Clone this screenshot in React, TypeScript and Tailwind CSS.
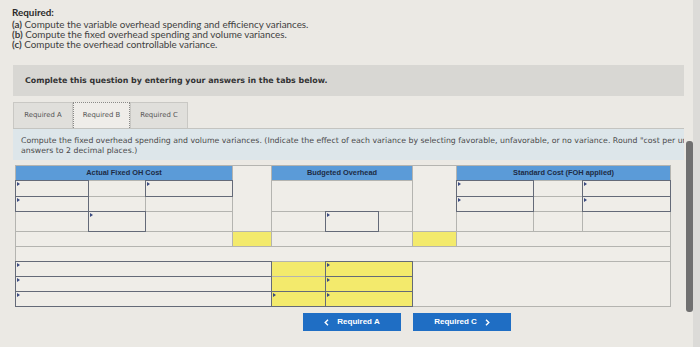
import * as React from "react";

type Cell = { pos: string; kind: "plain" | "head" | "input" | "yellow" | "yinput"; label?: string };

// grid columns follow the x edges of the reference table
const cells: Cell[] = [
  // header
  { pos: "col-start-1 col-span-3 row-start-1", kind: "head", label: "Actual Fixed OH Cost" },
  { pos: "col-start-4 col-span-1 row-start-1 row-span-4", kind: "plain" },
  { pos: "col-start-5 col-span-3 row-start-1", kind: "head", label: "Budgeted Overhead" },
  { pos: "col-start-8 col-span-1 row-start-1 row-span-4", kind: "plain" },
  { pos: "col-start-9 col-span-3 row-start-1", kind: "head", label: "Standard Cost (FOH applied)" },
  // row 1
  { pos: "col-start-1 row-start-2", kind: "input" },
  { pos: "col-start-2 row-start-2", kind: "plain" },
  { pos: "col-start-3 row-start-2", kind: "input" },
  { pos: "col-start-5 col-span-3 row-start-2 row-span-2", kind: "plain" },
  { pos: "col-start-9 row-start-2", kind: "input" },
  { pos: "col-start-10 row-start-2", kind: "plain" },
  { pos: "col-start-11 row-start-2", kind: "input" },
  // row 2
  { pos: "col-start-1 row-start-3", kind: "input" },
  { pos: "col-start-2 row-start-3", kind: "plain" },
  { pos: "col-start-3 row-start-3", kind: "plain" },
  { pos: "col-start-9 row-start-3", kind: "input" },
  { pos: "col-start-10 row-start-3", kind: "plain" },
  { pos: "col-start-11 row-start-3", kind: "input" },
  // row 3
  { pos: "col-start-1 row-start-4", kind: "plain" },
  { pos: "col-start-2 row-start-4", kind: "input" },
  { pos: "col-start-3 row-start-4", kind: "plain" },
  { pos: "col-start-5 row-start-4", kind: "plain" },
  { pos: "col-start-6 row-start-4", kind: "input" },
  { pos: "col-start-7 row-start-4", kind: "plain" },
  { pos: "col-start-9 row-start-4", kind: "plain" },
  { pos: "col-start-10 row-start-4", kind: "plain" },
  { pos: "col-start-11 row-start-4", kind: "plain" },
  // row 4 (variances)
  { pos: "col-start-1 col-span-3 row-start-5", kind: "plain" },
  { pos: "col-start-4 row-start-5", kind: "yellow" },
  { pos: "col-start-5 col-span-3 row-start-5", kind: "plain" },
  { pos: "col-start-8 row-start-5", kind: "yellow" },
  { pos: "col-start-9 col-span-3 row-start-5", kind: "plain" },
  // spacer row
  { pos: "col-start-1 col-span-11 row-start-6", kind: "plain" },
  // bottom rows
  { pos: "col-start-1 col-span-4 row-start-7", kind: "input" },
  { pos: "col-start-5 row-start-7", kind: "yellow" },
  { pos: "col-start-6 col-span-2 row-start-7", kind: "yinput" },
  { pos: "col-start-8 col-span-4 row-start-7 row-span-3", kind: "plain" },
  { pos: "col-start-1 col-span-4 row-start-8", kind: "input" },
  { pos: "col-start-5 row-start-8", kind: "yellow" },
  { pos: "col-start-6 col-span-2 row-start-8", kind: "yinput" },
  { pos: "col-start-1 col-span-4 row-start-9", kind: "input" },
  { pos: "col-start-5 row-start-9", kind: "yinput" },
  { pos: "col-start-6 col-span-2 row-start-9", kind: "yinput" },
];

function Marker() {
  return (
    <svg className="absolute left-[1px] top-[1px]" width="3" height="4" viewBox="0 0 3 4">
      <path d="M0 0 L3 2 L0 4 Z" fill="#3a4a80" />
    </svg>
  );
}

function GridCell({ c }: { c: Cell }) {
  if (c.kind === "head") {
    return (
      <div
        className={`${c.pos} flex items-center justify-center border-r border-b border-[#b4b4b0] bg-[#5b9bd8] font-['Liberation_Sans',sans-serif] text-[7.4px] font-bold text-[#1d2b45]`}
      >
        {c.label}
      </div>
    );
  }
  const yellow = c.kind === "yellow" || c.kind === "yinput";
  const input = c.kind === "input" || c.kind === "yinput";
  return (
    <div className={`${c.pos} relative border-r border-b border-[#b4b4b0] ${yellow ? "bg-[#f3ea6c]" : "bg-[#efede8]"}`}>
      {input && (
        <div className="absolute -left-px -top-px -right-px -bottom-px border-[1.5px] border-[#646a78]">
          <Marker />
        </div>
      )}
    </div>
  );
}

function Chevron({ dir }: { dir: "l" | "r" }) {
  return (
    <svg width="5" height="7" viewBox="0 0 5 7">
      <path
        d={dir === "l" ? "M4 0.8 L1.2 3.5 L4 6.2" : "M1 0.8 L3.8 3.5 L1 6.2"}
        fill="none"
        stroke="white"
        strokeWidth="1.4"
      />
    </svg>
  );
}

export default function App() {
  return (
    <div className="relative h-[347px] w-[700px] overflow-hidden bg-[#ebe9e4] font-['Lato',sans-serif]">
      <div className="pl-[12px] pt-[7px] text-[9.85px] text-[#3f3f3f]">
        <div className="mb-[1px] font-bold leading-[11px] text-[#2a2a2a]">Required:</div>
        <div className="leading-[10px]">
          <b>(a)</b> Compute the variable overhead spending and efficiency variances.
        </div>
        <div className="leading-[10px]">
          <b>(b)</b> Compute the fixed overhead spending and volume variances.
        </div>
        <div className="leading-[10px]">
          <b>(c)</b> Compute the overhead controllable variance.
        </div>
      </div>

      <div className="ml-[13px] mr-[16px] mt-[16px] flex h-[31px] items-center bg-[#d8d7d3] pl-[12px] font-['DejaVu_Sans',sans-serif] text-[7.9px] font-bold text-[#333]">
        Complete this question by entering your answers in the tabs below.
      </div>

      <div className="ml-[13px] mt-[6px] flex h-[26px] font-['DejaVu_Sans',sans-serif] text-[6.9px] text-[#555]">
        <div className="flex w-[60px] items-center justify-center border border-b-0 border-[#c9c8c4] bg-[#e0dfdb]">Required A</div>
        <div className="flex w-[57px] items-center justify-center border-x border-t border-dotted border-[#8a8a88] bg-[#efede9]">Required B</div>
        <div className="flex w-[58px] items-center justify-center border border-b-0 border-[#c9c8c4] bg-[#e0dfdb]">Required C</div>
      </div>

      <div className="ml-[13px] mr-[16px] border-t border-[#c4c4c0]">
        <div className="h-[31px] overflow-hidden bg-[#dde6ea] pl-[8px] pt-[7px] font-['DejaVu_Sans',sans-serif] text-[7.8px] leading-[9.5px] text-[#4a4a4a]">
          <div className="whitespace-nowrap">
            Compute the fixed overhead spending and volume variances. (Indicate the effect of each variance by selecting favorable, unfavorable, or no variance. Round "cost per unit"
          </div>
          <div>answers to 2 decimal places.)</div>
        </div>

        <div className="ml-[2px] mt-[5px] grid w-fit grid-cols-[73px_57px_87px_39px_54px_53px_34px_44px_77px_49px_88px] grid-rows-[15px_16px_15px_20px_15px_15px_15px_15px_15px] border-l border-t border-[#b4b4b0]">
          {cells.map((c, i) => (
            <GridCell key={i} c={c} />
          ))}
        </div>

        <div className="ml-[290px] mt-[6px] flex gap-[12px] font-['Liberation_Sans',sans-serif] text-[8px] font-bold text-white">
          <button className="flex h-[18px] w-[98px] items-center justify-center gap-[8px] bg-[#1f6ec4]">
            <Chevron dir="l" />
            <span>Required A</span>
          </button>
          <button className="flex h-[18px] w-[98px] items-center justify-center gap-[8px] bg-[#1f6ec4]">
            <span>Required C</span>
            <Chevron dir="r" />
          </button>
        </div>
      </div>

      {/* scrollbar */}
      <div className="absolute right-0 top-0 h-full w-[7px] bg-[#dcdbd8]" />
      <div className="absolute left-[686px] top-[141px] h-[171px] w-[7px] rounded-[3px] bg-[#707070]" />
    </div>
  );
}
